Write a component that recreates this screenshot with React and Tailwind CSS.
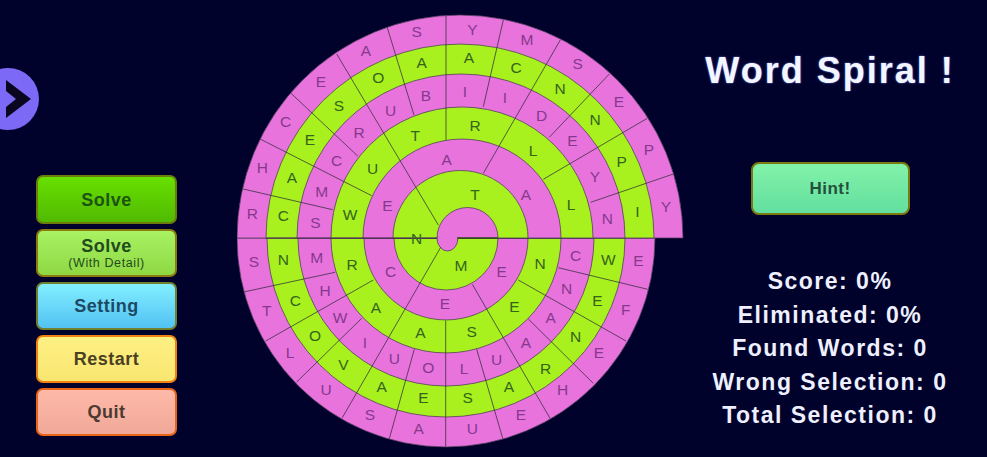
import React from 'react';

const PINK = '#e873dd';
const GREEN = '#a9f01f';

// upper half: semicircles shift right as the spiral winds outward
const TOP_RINGS = [
    [460, 223, PINK], [460, 194, GREEN], [461, 164, PINK],
    [462, 131, GREEN], [462, 99, PINK], [460.5, 67.5, GREEN], [467.5, 30.5, PINK],
];
// lower half: concentric around 446
const BOTTOM_RINGS = [
    [446, 209, PINK], [446, 179, GREEN], [446, 148, PINK],
    [446, 115, GREEN], [446, 82, PINK], [446, 52, GREEN],
];

const SEPARATORS = [
    [387.3, 27.7, 414, 115], [336.7, 54, 438.3, 225], [291, 93.3, 357.7, 156],
    [260.7, 139.3, 371.7, 195.7], [243.3, 189, 332.7, 209.7], [446, 16, 446, 140],
    [503.3, 20, 483.3, 106.7], [560.3, 40, 483.3, 173.3], [609.3, 74, 549.3, 137.3],
    [647.3, 118.3, 543.3, 179.3], [673.3, 174, 590.7, 202.3],
    [245, 291.7, 335, 272.3], [265.7, 341, 373.3, 280], [296.7, 382, 361.7, 318.3],
    [342.3, 417.7, 440.7, 247.3], [389.3, 438.7, 414.3, 349.3], [445.7, 446.7, 445.7, 320.7],
    [502.7, 438.3, 476.7, 349.3], [550, 418.3, 472.3, 284.3], [593.3, 383.3, 528.3, 319],
    [626, 341, 518.3, 280], [647.7, 289.3, 558.3, 267.7],
];

const PINK_LETTERS = [
    ['S', 416.7, 31.7], ['A', 366, 50], ['E', 321, 81], ['C', 285.7, 121.7], ['H', 262.3, 167.3], ['R', 252.3, 213.3],
    ['B', 426, 95], ['U', 390.7, 110.7], ['R', 359, 132.7], ['C', 336.7, 160], ['M', 321.7, 191], ['S', 315.3, 222.3],
    ['A', 446.7, 159.3], ['E', 387.3, 205.7],
    ['Y', 472.3, 29], ['M', 527, 39], ['S', 577.7, 63.3], ['E', 619, 101], ['P', 649, 149], ['Y', 666, 206.7],
    ['I', 465, 91.7], ['I', 505, 97.3], ['D', 541.7, 115], ['E', 572.3, 140.7], ['Y', 595, 176], ['N', 607.3, 218.3],
    ['A', 526, 194.3],
    ['S', 254, 261.7], ['M', 316.7, 257.3], ['C', 390.7, 271], ['T', 266.7, 310], ['H', 325, 290], ['W', 340, 317.3],
    ['L', 290, 352.7], ['I', 365, 342.3], ['E', 445, 303.3], ['U', 326, 389], ['U', 394.3, 358.3], ['O', 428.3, 367.7],
    ['S', 370, 414.3], ['A', 418.7, 428.3],
    ['E', 501.7, 271.7], ['C', 575.7, 255], ['E', 638.3, 260.7], ['N', 566.7, 288.3], ['F', 625.7, 309],
    ['A', 550.7, 317.7], ['E', 599, 352.7], ['A', 526, 342.7], ['U', 496.7, 359.3], ['L', 464, 368.3],
    ['H', 562.7, 389.3], ['E', 521, 414.3], ['U', 472.3, 428.3],
];

const GREEN_LETTERS = [
    ['A', 421.7, 62.3], ['O', 378.3, 77.7], ['S', 339, 105], ['E', 310, 139.3], ['A', 292, 177.3], ['C', 283.3, 215.7],
    ['T', 415.3, 135], ['U', 372.7, 168.3], ['W', 350, 214.3], ['N', 416.7, 238.3],
    ['A', 469, 57.7], ['C', 516, 67], ['N', 560, 88.3], ['N', 595, 119.3], ['P', 621.7, 161.7], ['I', 637.3, 211.7],
    ['R', 475, 125.7], ['L', 533, 150.7], ['L', 571, 204], ['T', 475, 194],
    ['N', 283.3, 259.3], ['R', 352, 264], ['C', 295.3, 300], ['A', 376, 307.3], ['O', 315, 335], ['A', 420.3, 332.7],
    ['V', 343.3, 364.3], ['A', 381.7, 386], ['E', 423.3, 397.7],
    ['M', 461, 265], ['N', 540, 263.3], ['W', 608.3, 259], ['E', 597.3, 300], ['E', 514.3, 306.7], ['N', 575.7, 336.7],
    ['S', 471.7, 331.7], ['R', 545.7, 368.3], ['A', 509, 386.7], ['S', 467.7, 397.7],
];

const STATS = ['Score: 0%', 'Eliminated: 0%', 'Found Words: 0', 'Wrong Selection: 0', 'Total Selection: 0'];

function Spiral() {
    return (
        <svg viewBox="237 10 450 440" className="w-[450px] h-[440px] mt-[10px] shrink-0">
            {BOTTOM_RINGS.map(([cx, r, fill]) => (
                <path key={r} d={`M${cx - r} 238 A${r} ${r} 0 0 0 ${cx + r} 238 Z`} fill={fill} stroke="#4a3a55" strokeOpacity="0.75" strokeWidth="1" />
            ))}
            {TOP_RINGS.map(([cx, r, fill]) => (
                <path key={r} d={`M${cx - r} 238 A${r} ${r} 0 0 1 ${cx + r} 238 Z`} fill={fill} stroke="#4a3a55" strokeOpacity="0.75" strokeWidth="1" />
            ))}
            {/* inner curl */}
            <path d="M437 238 A10.5 10.5 0 0 0 458 238 L457 237 L440 237 Z" fill={PINK} stroke="none" />
            <path d="M437 238 A10.5 13 0 0 0 458 238" fill={PINK} stroke="#4a3a55" strokeOpacity="0.75" />
            <path d="M457 238 L498 238" stroke="#3a4a20" strokeWidth="1.5" />
            <path d="M266 238 L437 238" stroke="#4a2a55" strokeOpacity="0.7" />
            {SEPARATORS.map(([x1, y1, x2, y2]) => (
                <line key={`${x1}-${y1}`} x1={x1} y1={y1} x2={x2} y2={y2} stroke="#2a2a35" strokeOpacity="0.72" strokeWidth="1" />
            ))}
            <g className="font-['Liberation_Sans',sans-serif] text-[15.5px]" textAnchor="middle" dominantBaseline="central">
                {PINK_LETTERS.map(([c, x, y]) => (
                    <text key={`${x}-${y}`} x={x} y={y} fill="#85398d">{c}</text>
                ))}
                {GREEN_LETTERS.map(([c, x, y]) => (
                    <text key={`${x}-${y}`} x={x} y={y} fill="#33641a">{c}</text>
                ))}
            </g>
        </svg>
    );
}

export default function App() {
    const boton = "w-[141px] rounded-[7px] border-[2.5px] flex flex-col items-center justify-center font-bold text-[18px] leading-[20px] tracking-[0.5px]";
    return (
        <div className="w-[987px] h-[457px] overflow-hidden flex bg-[#00022b] font-['Liberation_Sans',sans-serif]">
            <div className="w-[237px] shrink-0 pl-[36px] flex flex-col">
                <div className="w-[62px] h-[62px] -ml-[59px] mt-[68px] rounded-full bg-[#7c69f6] flex items-center justify-center">
                    <svg viewBox="0 0 62 62" className="w-[62px] h-[62px]">
                        <polygon points="29,12 54,31 29,50 29,39 39,31 29,23" fill="#0a0620" />
                    </svg>
                </div>
                <div className="mt-[45px] flex flex-col gap-[5px]">
                    <button className={`${boton} h-[49px] border-[#6d7d0c] bg-gradient-to-b from-[#68e000] to-[#50ba02] text-[#1c5512]`}>Solve</button>
                    <button className={`${boton} h-[48px] border-[#8a7a10] bg-gradient-to-b from-[#a8f263] to-[#8fd843] text-[#234a1c]`}>
                        <span>Solve</span>
                        <span className="text-[12.5px] leading-[14px] font-normal tracking-[0.6px]">(With Detail)</span>
                    </button>
                    <button className={`${boton} h-[48px] border-[#70802c] bg-gradient-to-b from-[#82efff] to-[#52c2f2] text-[#1c4a66]`}>Setting</button>
                    <button className={`${boton} h-[48px] border-[#f08212] bg-gradient-to-b from-[#fff084] to-[#f8e670] text-[#4a4022]`}>Restart</button>
                    <button className={`${boton} h-[48px] border-[#ea6418] bg-gradient-to-b from-[#ffb9a8] to-[#f0a998] text-[#4a3a32]`}>Quit</button>
                </div>
            </div>
            <Spiral />
            <div className="w-[286px] shrink-0 flex flex-col items-center">
                <h1 className="mt-[51px] text-[36px] leading-[40px] font-bold tracking-[2px] whitespace-nowrap text-[#f3f5ff] [text-shadow:0_0_2px_#7688ff]">Word Spiral !</h1>
                <button className="mt-[71px] w-[159px] h-[53px] rounded-[8px] border-[2.5px] border-[#7a7a10] bg-gradient-to-b from-[#82f2a8] to-[#62dfa0] text-[#23503a] text-[17px] font-bold tracking-[0.5px]">Hint!</button>
                <div className="mt-[50px] flex flex-col items-center text-[23px] leading-[33.5px] font-bold tracking-[1.5px] text-[#eef0ff] whitespace-nowrap">
                    {STATS.map((linea) => (
                        <p key={linea}>{linea}</p>
                    ))}
                </div>
            </div>
        </div>
    );
}
